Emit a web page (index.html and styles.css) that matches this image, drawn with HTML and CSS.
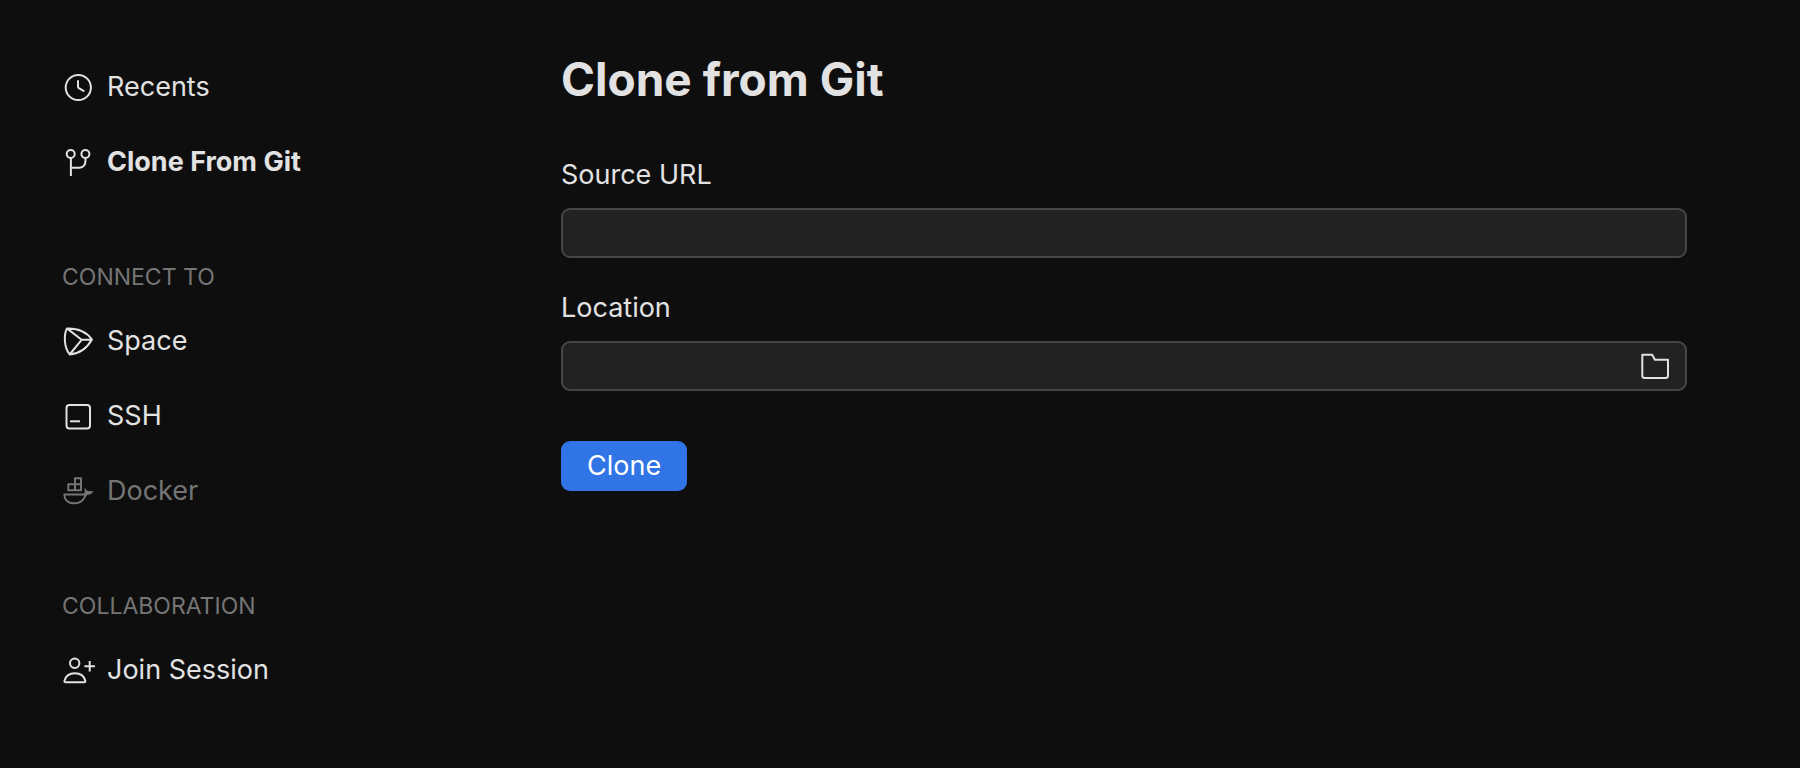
FILE: index.html
```html
<!DOCTYPE html>
<html lang="en">
<head>
<meta charset="utf-8">
<title>Clone from Git</title>
<link rel="stylesheet" href="styles.css">
</head>
<body>
<div class="welcome">
  <nav class="sidebar">
    <div class="group">
      <a class="item" href="#recents">
        <svg class="icon" viewBox="0 0 32 32"><circle cx="16.3" cy="16.5" r="12.6"/><path d="M16 9.3v6.2q0 1 .9 1.6l5.4 3.3"/></svg>
        Recents
      </a>
      <a class="item active" href="#clone" aria-current="page">
        <svg class="icon" viewBox="0 0 32 32"><circle cx="8.7" cy="8" r="4"/><circle cx="23.4" cy="8" r="4"/><path d="M8.9 12v18M8.900 21.700h8.600q6-.5 6-7.200v-2.500"/></svg>
        Clone From Git
      </a>
    </div>
    <div class="group">
      <h2 class="caption">CONNECT TO</h2>
      <a class="item" href="#space">
        <svg class="icon" viewBox="0 0 32 32"><path d="M5 3.400C1.800 9.500 1.700 21.500 7.600 29.500 18 28.500 25.500 22.500 29.900 14.500 24.500 6.500 15.500 3.200 5 3.400L19.600 14.800 7.600 29.500M19.600 14.800l10.300-.3"/></svg>
        Space
      </a>
      <a class="item" href="#ssh">
        <svg class="icon" viewBox="0 0 32 32"><rect x="4.500" y="5" width="23.500" height="23.500" rx="3"/><path d="M8 21.300h10"/></svg>
        SSH
      </a>
      <a class="item muted" href="#docker">
        <svg class="icon" viewBox="0 0 32 32"><path d="M13 9V3.300h6v12H6.300V9.300H19M13 9v6.300M2.300 19.500c.2 5.500 4 8.700 9.200 8.700h2c5.500 0 8.500-3.500 10.500-8.700z"/><path class="solid" d="M22.700 12.700l2.600 3q3 .8 6.200.3-1.500 3.700-5.500 3.700l-1.500.8h-3q1.700-3.500 1.200-7.800z"/></svg>
        Docker
      </a>
    </div>
    <div class="group">
      <h2 class="caption">COLLABORATION</h2>
      <a class="item" href="#join">
        <svg class="icon" viewBox="0 0 32 32"><circle cx="12.700" cy="9.300" r="4.700"/><path d="M3.600 28.300q-1.400 0-1.100-1.500c1.200-4.700 5-7.500 10.400-7.500s9.200 2.800 10.400 7.500q.3 1.500-1.100 1.500zM22.400 12.300h10.600M27.700 7v10.600"/></svg>
        Join Session
      </a>
    </div>
  </nav>
  <main class="content">
    <h1 class="title">Clone from Git</h1>
    <form class="form">
      <div class="field">
        <label for="url">Source URL</label>
        <div class="box"><input id="url" type="text"></div>
      </div>
      <div class="field">
        <label for="location">Location</label>
        <div class="box">
          <input id="location" type="text">
          <button class="browse" type="button" aria-label="Browse">
            <svg class="icon" viewBox="0 0 32 32"><path d="M3.300 4.700h9.900l2.700 5h13.100v15.800q0 2.500-2.500 2.500H5.800q-2.500 0-2.500-2.500z"/></svg>
          </button>
        </div>
      </div>
      <button class="submit" type="button">Clone</button>
    </form>
  </main>
</div>
</body>
</html>
```
FILE: styles.css
```css
* {
  box-sizing: border-box;
}

body {
  margin: 0;
  background: #0e0e0e;
  color: #e2e2e2;
  font-family: Inter, "Liberation Sans", sans-serif;
  font-size: 27px;
  font-optical-sizing: none;
  line-height: 34px;
}

.welcome {
  display: flex;
  min-height: 100vh;
  padding: 50px 113px 50px 62px;
}

.sidebar {
  display: flex;
  flex: 0 0 499px;
  flex-direction: column;
  gap: 50px;
}

.group {
  display: flex;
  flex-direction: column;
}

.item {
  display: flex;
  align-items: center;
  gap: 13px;
  height: 75px;
  padding-bottom: 1px;
  color: inherit;
  text-decoration: none;
}

.active {
  font-weight: 700;
}

.muted {
  color: #757575;
}

.caption {
  margin: 0;
  color: #757575;
  font-size: 23px;
  font-weight: 400;
  line-height: 54px;
}

.icon {
  display: block;
  flex: none;
  width: 32px;
  height: 32px;
  overflow: visible;
  fill: none;
  stroke: currentColor;
  stroke-width: 2;
  stroke-linejoin: round;
}

.solid {
  fill: currentColor;
  stroke: none;
}

.content {
  flex: 1;
  min-width: 0;
}

.title {
  margin: 0 0 50px;
  font-size: 46px;
  font-weight: 700;
  line-height: 58px;
}

.form {
  display: flex;
  flex-direction: column;
  align-items: flex-start;
}

.field {
  display: flex;
  flex-direction: column;
  align-self: stretch;
  gap: 16px;
  margin-bottom: 33px;
}

.box {
  display: flex;
  align-items: center;
  height: 50px;
  padding-right: 14px;
  border: 2px solid #464646;
  border-radius: 9px;
  background: #222;
}

.box input {
  flex: 1;
  min-width: 0;
  height: 100%;
  padding: 0 12px;
  border: 0;
  outline: 0;
  background: none;
  color: inherit;
  font: inherit;
}

.browse {
  padding: 0;
  border: 0;
  background: none;
  color: inherit;
}

.submit {
  height: 50px;
  margin-top: 17px;
  padding: 0 26px;
  border: 0;
  border-radius: 9px;
  background: #3074e6;
  color: #fff;
  font: inherit;
}
```
